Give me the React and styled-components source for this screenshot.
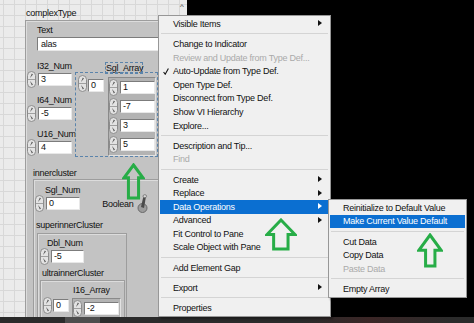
import React from 'react';
import styled, { createGlobalStyle } from 'styled-components';

const GlobalStyle = createGlobalStyle`
  html, body {
    margin: 0;
    padding: 0;
    background: #000;
  }
`;

const Screen = styled.div`
  position: relative;
  width: 474px;
  height: 323px;
  overflow: hidden;
  display: flex;
  flex-direction: column;
  background: #000;
  font-family: "Liberation Sans", Arial, sans-serif;
  font-size: 9px;
  letter-spacing: -0.25px;
  color: #111;
`;

const Desktop = styled.div`
  display: flex;
  height: 317px;
`;

const Canvas = styled.div`
  position: relative;
  width: 187px;
  flex: none;
  overflow: hidden;
  display: flex;
  flex-direction: column;
  padding: 8px 0 0 25px;
  box-sizing: border-box;
  background-color: #ebebeb;
  background-image: linear-gradient(#d8d8d8 1px, transparent 1px),
    linear-gradient(90deg, #d8d8d8 1px, transparent 1px);
  background-size: 11px 11px;
  background-position: 3px 4px;
`;

const Void = styled.div`
  flex: 1;
  background: #000;
`;

const Taskbar = styled.div`
  height: 6px;
  background: linear-gradient(
    90deg,
    #2b2b2b 0,
    #2b2b2b 65px,
    #4d4d4d 65px,
    #4d4d4d 100px,
    #2b2b2b 100px,
    #2b2b2b 300px,
    #3b2626 370px,
    #2b2b2b 450px
  );
`;

const Caret = styled.div`
  position: absolute;
  left: 180px;
  top: 2px;
  font-size: 8px;
  color: #333;
`;

const Label = styled.div`
  height: 10px;
  line-height: 10px;
  white-space: nowrap;
  margin-left: ${(p) => p.$indent || 0}px;
  margin-top: ${(p) => p.$top || 0}px;
  margin-bottom: ${(p) => p.$bottom || 0}px;
`;

const Cluster = styled.div`
  display: flex;
  flex-direction: column;
  flex: 1;
  box-sizing: border-box;
  width: ${(p) => p.$width}px;
  margin-left: ${(p) => p.$left || 0}px;
  margin-top: ${(p) => p.$top || 0}px;
  padding-top: ${(p) => p.$pad || 0}px;
  background: #c3c3c3;
  border: 1px solid #9d9d9d;
  box-shadow: inset 1px 1px 0 #dcdcdc;
`;

const TextBox = styled.div`
  box-sizing: border-box;
  width: 160px;
  height: 14px;
  margin: 2px 0 0 11px;
  padding-left: 3px;
  line-height: 12px;
  background: #fff;
  border: 1px solid;
  border-color: #7c7c7c #e8e8e8 #e8e8e8 #7c7c7c;
`;

const Row = styled.div`
  display: flex;
  align-items: flex-start;
  margin-top: ${(p) => p.$top || 0}px;
`;

const Column = styled.div`
  display: flex;
  flex-direction: column;
  gap: ${(p) => p.$gap || 0}px;
  width: ${(p) => (p.$width ? `${p.$width}px` : 'auto')};
  flex: none;
`;

const Numeric = styled.div`
  display: flex;
  align-items: ${(p) => p.$align || 'center'};
  height: 17px;
  margin-left: ${(p) => p.$left || 0}px;
  flex: none;
`;

const NumBox = styled.div`
  box-sizing: border-box;
  width: ${(p) => p.$w}px;
  height: 13px;
  margin-left: ${(p) => p.$gap ?? 2}px;
  padding-left: 2px;
  line-height: 11px;
  background: #fff;
  border: 1px solid;
  border-color: #7c7c7c #e8e8e8 #e8e8e8 #7c7c7c;
`;

const ArrayLabel = styled.div`
  box-sizing: border-box;
  width: ${(p) => p.$w}px;
  height: 12px;
  margin: 1px 0 0 ${(p) => p.$indent}px;
  line-height: 10px;
  text-align: center;
  border: 1px dashed ${(p) => (p.$selected ? '#5b84ab' : 'transparent')};
`;

const ArrayFrame = styled.div`
  display: flex;
  align-items: flex-start;
  box-sizing: border-box;
  width: 83px;
  height: 85px;
  margin-top: -2px;
  padding: 2px 0 0 1px;
  border: 1px dashed #5b84ab;
`;

const ElementFrame = styled.div`
  display: flex;
  flex-direction: column;
  box-sizing: border-box;
  width: ${(p) => p.$w}px;
  margin: ${(p) => p.$top}px 0 0 ${(p) => p.$left}px;
  padding-top: 1px;
  background: #b3b3b3;
  border: 1px solid;
  border-color: #8a8a8a #e2e2e2 #e2e2e2 #8a8a8a;
`;

const ElementRow = styled.div`
  display: flex;
  align-items: flex-start;
  height: 19px;
`;

const BooleanGroup = styled.div`
  display: flex;
  align-items: center;
  height: 21px;
  gap: 3px;
  margin: 8px 0 0 22px;
`;

const SpinnerSvg = styled.svg`
  display: block;
  flex: none;
`;

const Spinner = () => (
  <SpinnerSvg width="9" height="17" viewBox="0 0 9 17">
    <rect x="0.5" y="0.5" width="8" height="16" rx="4" fill="#e3e3e3" stroke="#8c8c8c" />
    <line x1="1" y1="8.5" x2="8" y2="8.5" stroke="#a0a0a0" />
    <path d="M3 7 L4.8 2.6 L6 3.6 Z" fill="#5a5a5a" />
    <path d="M3 10 L4.8 14.4 L6 13.4 Z" fill="#5a5a5a" />
  </SpinnerSvg>
);

const Toggle = () => (
  <svg width="11" height="21" viewBox="0 0 11 21">
    <ellipse cx="5.5" cy="15" rx="4.5" ry="4.5" fill="#9c9c9c" stroke="#6a6a6a" />
    <path d="M4 14 L6.5 3 L9 3.5 L7 15 Z" fill="#4a4a4a" />
    <ellipse cx="7.8" cy="3.2" rx="1.8" ry="1.5" fill="#d8d8d8" stroke="#555" strokeWidth="0.6" />
  </svg>
);

const NumControl = ({ label, value, indent = 11, left = 1, width = 34 }) => (
  <Column>
    <Label $indent={indent}>{label}</Label>
    <Numeric $left={left}>
      <Spinner />
      <NumBox $w={width}>{value}</NumBox>
    </Numeric>
  </Column>
);

const Menu = styled.div`
  position: absolute;
  left: ${(p) => p.$x}px;
  top: ${(p) => p.$y}px;
  width: ${(p) => p.$w}px;
  box-sizing: border-box;
  padding: 1px 0;
  background: #f0f0f0;
  border: 1px solid #979797;
  box-shadow: 2px 2px 2px rgba(0, 0, 0, 0.35);
`;

const Item = styled.div`
  position: relative;
  display: flex;
  align-items: center;
  height: 13.6px;
  margin: 0 1px;
  padding-left: 13px;
  white-space: nowrap;
  color: ${(p) => (p.$disabled ? '#aaaaaa' : p.$active ? '#fff' : '#111')};
  background: ${(p) => (p.$active ? '#0b6fd1' : 'transparent')};
`;

const SubArrow = styled.span`
  position: absolute;
  right: 7px;
  top: 3.3px;
  width: 0;
  height: 0;
  border-top: 3.5px solid transparent;
  border-bottom: 3.5px solid transparent;
  border-left: 4px solid ${(p) => (p.$active ? '#fff' : '#111')};
`;

const Check = styled.svg`
  position: absolute;
  left: 3px;
  top: 3.5px;
`;

const Separator = styled.div`
  height: 6.6px;
  display: flex;
  align-items: center;
  margin: 0 2px;

  &::after {
    content: '';
    flex: 1;
    height: 1px;
    background: #d4d4d4;
  }
`;

const ArrowSvg = styled.svg`
  position: absolute;
  left: ${(p) => p.$x}px;
  top: ${(p) => p.$y}px;
`;

const GreenArrow = ({ x, y, w, h, head, stem }) => {
  const hy = h * head;
  const sl = w * stem[0];
  const sr = w * stem[1];
  const d = `M${w / 2} 2 L${w - 2} ${hy} L${sr} ${hy} L${sr} ${h - 2} L${sl} ${h - 2} L${sl} ${hy} L2 ${hy} Z`;
  return (
    <ArrowSvg $x={x} $y={y} width={w} height={h} viewBox={`0 0 ${w} ${h}`}>
      <path d={d} fill="none" stroke="#27ad47" strokeWidth="3" strokeLinejoin="miter" />
    </ArrowSvg>
  );
};

const mainMenu = [
  { t: 'Visible Items', sub: true },
  'sep',
  { t: 'Change to Indicator' },
  { t: 'Review and Update from Type Def...', off: true },
  { t: 'Auto-Update from Type Def.', check: true },
  { t: 'Open Type Def.' },
  { t: 'Disconnect from Type Def.' },
  { t: 'Show VI Hierarchy' },
  { t: 'Explore...' },
  'sep',
  { t: 'Description and Tip...' },
  { t: 'Find', off: true },
  'sep',
  { t: 'Create', sub: true },
  { t: 'Replace', sub: true },
  { t: 'Data Operations', sub: true, active: true },
  { t: 'Advanced', sub: true },
  { t: 'Fit Control to Pane' },
  { t: 'Scale Object with Pane' },
  'sep',
  { t: 'Add Element Gap' },
  'sep',
  { t: 'Export', sub: true },
  'sep',
  { t: 'Properties' },
];

const dataMenu = [
  { t: 'Reinitialize to Default Value' },
  { t: 'Make Current Value Default', active: true },
  'sep',
  { t: 'Cut Data' },
  { t: 'Copy Data' },
  { t: 'Paste Data', off: true },
  'sep',
  { t: 'Empty Array' },
];

const MenuList = ({ items, x, y, w }) => (
  <Menu $x={x} $y={y} $w={w}>
    {items.map((it, i) =>
      it === 'sep' ? (
        <Separator key={i} />
      ) : (
        <Item key={i} $disabled={it.off} $active={it.active}>
          {it.check && (
            <Check width="6" height="7" viewBox="0 0 6 7">
              <path d="M0.6 4 L2.2 6.2 L5.4 0.6" fill="none" stroke="#111" strokeWidth="1.1" />
            </Check>
          )}
          {it.t}
          {it.sub && <SubArrow $active={it.active} />}
        </Item>
      )
    )}
  </Menu>
);

export default function App() {
  return (
    <Screen>
      <GlobalStyle />
      <Desktop>
        <Canvas>
          <Caret>^</Caret>
          <Label $indent={1} $bottom={2}>complexType</Label>
          <Cluster $width={200} $pad={4}>
            <Label $indent={11}>Text</Label>
            <TextBox>alas</TextBox>
            <Row $top={10}>
              <Column $width={49} $gap={7}>
                <NumControl label="I32_Num" value="3" />
                <NumControl label="I64_Num" value="-5" />
                <NumControl label="U16_Num" value="4" />
              </Column>
              <Column>
                <ArrayLabel $w={38} $indent={30} $selected>Sgl_Array</ArrayLabel>
                <ArrayFrame>
                  <Numeric $left={1} $align="flex-end">
                    <Spinner />
                    <NumBox $w={16} $gap={1}>0</NumBox>
                  </Numeric>
                  <ElementFrame $w={48} $top={2} $left={4}>
                    {['1', '-7', '3', '5'].map((v) => (
                      <ElementRow key={v}>
                        <Numeric>
                          <Spinner />
                          <NumBox $w={35}>{v}</NumBox>
                        </Numeric>
                      </ElementRow>
                    ))}
                  </ElementFrame>
                </ArrayFrame>
              </Column>
            </Row>
            <Label $indent={7} $top={11}>innercluster</Label>
            <Cluster $width={200} $left={7} $top={1} $pad={5}>
              <Row>
                <NumControl label="Sgl_Num" value="0" />
                <BooleanGroup>
                  <span>Boolean</span>
                  <Toggle />
                </BooleanGroup>
              </Row>
              <Label $indent={2} $top={6}>superinnerCluster</Label>
              <Cluster $width={90} $left={3} $top={3} $pad={4}>
                <NumControl label="Dbl_Num" value="-5" indent={9} left={2} width={33} />
                <Label $indent={4} $top={3}>ultrainnerCluster</Label>
                <Cluster $width={85} $left={2} $top={2} $pad={4}>
                  <Label $indent={32}>I16_Array</Label>
                  <Row $top={2}>
                    <Numeric $left={2}>
                      <Spinner />
                      <NumBox $w={16} $gap={1}>0</NumBox>
                    </Numeric>
                    <ElementFrame $w={49} $top={1} $left={3}>
                      <ElementRow>
                        <Numeric>
                          <Spinner />
                          <NumBox $w={35}>-2</NumBox>
                        </Numeric>
                      </ElementRow>
                    </ElementFrame>
                  </Row>
                </Cluster>
              </Cluster>
            </Cluster>
          </Cluster>
        </Canvas>
        <Void />
      </Desktop>
      <Taskbar />
      <MenuList items={mainMenu} x={158} y={15} w={173} />
      <MenuList items={dataMenu} x={328} y={199} w={139} />
      <GreenArrow x={122} y={163} w={23} h={37} head={0.4} stem={[0.28, 0.72]} />
      <GreenArrow x={265} y={218} w={32} h={33} head={0.5} stem={[0.27, 0.72]} />
      <GreenArrow x={417} y={233} w={26} h={35} head={0.49} stem={[0.33, 0.69]} />
    </Screen>
  );
}
